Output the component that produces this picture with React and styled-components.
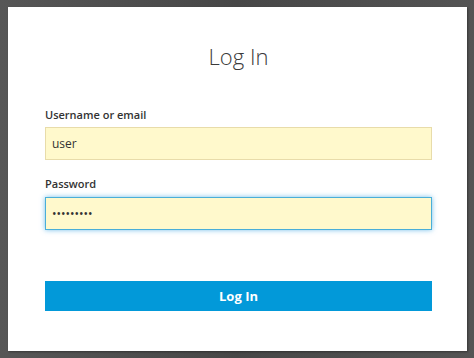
import React from 'react';
import styled, { createGlobalStyle } from 'styled-components';

const GlobalStyle = createGlobalStyle`
  html, body {
    margin: 0;
    padding: 0;
    height: 100%;
  }

  body {
    background: linear-gradient(90deg, #565656 0%, #474747 50%, #545454 100%);
    font-family: "Open Sans", "Noto Sans", sans-serif;
  }
`;

const Page = styled.div`
  box-sizing: border-box;
  height: 358px;
  padding: 7px 7px 7px 8px;
  display: flex;
`;

const Card = styled.form`
  flex: 1;
  box-sizing: border-box;
  background: #fff;
  padding: 35px 35px 40px 37px;
  display: flex;
  flex-direction: column;
  box-shadow: 1px 1px 2px rgba(0, 0, 0, 0.35);
`;

const Title = styled.h1`
  margin: 0 0 37px;
  font-size: 22px;
  line-height: 28px;
  font-weight: 300;
  color: #3a3a3a;
  text-align: center;
`;

const Label = styled.label`
  display: block;
  font-size: 11px;
  line-height: 16px;
  font-weight: 600;
  color: #333;
  margin-bottom: ${(p) => p.$gap}px;
`;

const Input = styled.input`
  box-sizing: border-box;
  width: 100%;
  height: 33px;
  margin: 0 0 ${(p) => p.$after}px;
  padding: 0 6px;
  font-family: "Open Sans", "Noto Sans", sans-serif;
  font-size: 12px;
  color: #333;
  caret-color: #111;
  background: #fff9cc;
  border: 1px solid ${(p) => (p.$focused ? '#4aaed8' : '#e8dcaa')};
  box-shadow: ${(p) => (p.$focused ? '0 0 5px rgba(70, 170, 230, 0.75)' : 'none')};
  outline: none;
  border-radius: 0;
`;

const Button = styled.button`
  height: 30px;
  margin-top: 51px;
  border: none;
  border-radius: 0;
  background: #0299d9;
  color: #fff;
  font-family: "Open Sans", "Noto Sans", sans-serif;
  font-size: 13px;
  font-weight: 700;
  cursor: pointer;
`;

const App = () => {
  return (
    <>
      <GlobalStyle />
      <Page>
        <Card onSubmit={(e) => e.preventDefault()}>
          <Title>Log In</Title>
          <Label htmlFor="username" $gap={4}>Username or email</Label>
          <Input id="username" type="text" defaultValue="user" $after={16} />
          <Label htmlFor="password" $gap={5}>Password</Label>
          <Input id="password" type="password" defaultValue="password1" $after={0} $focused autoFocus />
          <Button type="submit">Log In</Button>
        </Card>
      </Page>
    </>
  );
};

export default App;
